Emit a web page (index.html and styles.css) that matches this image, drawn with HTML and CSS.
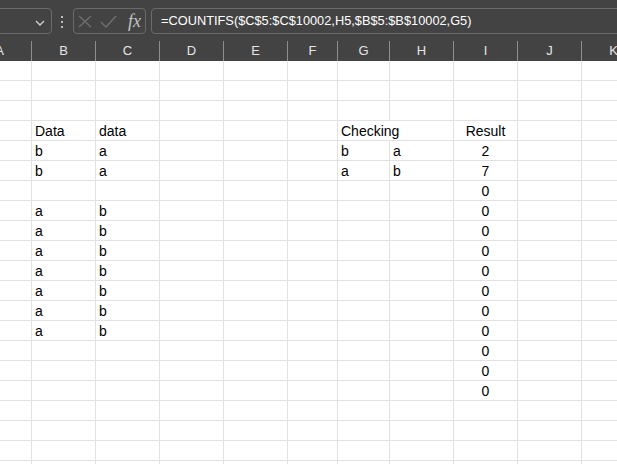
FILE: index.html
```html
<!DOCTYPE html>
<html>
<head>
<meta charset="utf-8">
<link rel="stylesheet" href="styles.css">
</head>
<body>
<div class="app">
  <div class="toolbar">
    <div class="namebox">
      <svg class="chev" width="10" height="6" viewBox="0 0 10 6"><polyline points="1,1 5,5 9,1" fill="none" stroke="#d2d2d2" stroke-width="1.3"/></svg>
    </div>
    <div class="dots"><span></span><span></span><span></span></div>
    <div class="fxbox">
      <svg width="48" height="24" viewBox="0 0 48 24">
        <path d="M5 7 L17 18 M17 7 L5 18" stroke="#707070" stroke-width="1.3" fill="none"/>
        <polyline points="27,13 32,18 42,7" stroke="#707070" stroke-width="1.3" fill="none"/>
      </svg>
      <span class="fx">fx</span>
    </div>
    <div class="formula">=COUNTIFS($C$5:$C$10002,H5,$B$5:$B$10002,G5)</div>
  </div>
  <div class="colhead">
    <div class="ch">A</div><div class="ch">B</div><div class="ch">C</div><div class="ch">D</div><div class="ch">E</div><div class="ch nf">F</div><div class="ch ng">G</div><div class="ch">H</div><div class="ch">I</div><div class="ch">J</div><div class="ch">K</div>
  </div>
  <div class="sheet">
    <div class="row"><div class="c"></div><div class="c"></div><div class="c"></div><div class="c"></div><div class="c"></div><div class="c"></div><div class="c"></div><div class="c"></div><div class="c"></div><div class="c"></div><div class="c"></div></div>
    <div class="row"><div class="c"></div><div class="c"></div><div class="c"></div><div class="c"></div><div class="c"></div><div class="c"></div><div class="c"></div><div class="c"></div><div class="c"></div><div class="c"></div><div class="c"></div></div>
    <div class="row"><div class="c"></div><div class="c"></div><div class="c"></div><div class="c"></div><div class="c"></div><div class="c"></div><div class="c"></div><div class="c"></div><div class="c"></div><div class="c"></div><div class="c"></div></div>
    <div class="row"><div class="c"></div><div class="c">Data</div><div class="c">data</div><div class="c"></div><div class="c"></div><div class="c"></div><div class="c spill">Checking</div><div class="c"></div><div class="c num">Result</div><div class="c"></div><div class="c"></div></div>
    <div class="row"><div class="c"></div><div class="c">b</div><div class="c">a</div><div class="c"></div><div class="c"></div><div class="c"></div><div class="c">b</div><div class="c">a</div><div class="c num">2</div><div class="c"></div><div class="c"></div></div>
    <div class="row"><div class="c"></div><div class="c">b</div><div class="c">a</div><div class="c"></div><div class="c"></div><div class="c"></div><div class="c">a</div><div class="c">b</div><div class="c num">7</div><div class="c"></div><div class="c"></div></div>
    <div class="row"><div class="c"></div><div class="c"></div><div class="c"></div><div class="c"></div><div class="c"></div><div class="c"></div><div class="c"></div><div class="c"></div><div class="c num">0</div><div class="c"></div><div class="c"></div></div>
    <div class="row"><div class="c"></div><div class="c">a</div><div class="c">b</div><div class="c"></div><div class="c"></div><div class="c"></div><div class="c"></div><div class="c"></div><div class="c num">0</div><div class="c"></div><div class="c"></div></div>
    <div class="row"><div class="c"></div><div class="c">a</div><div class="c">b</div><div class="c"></div><div class="c"></div><div class="c"></div><div class="c"></div><div class="c"></div><div class="c num">0</div><div class="c"></div><div class="c"></div></div>
    <div class="row"><div class="c"></div><div class="c">a</div><div class="c">b</div><div class="c"></div><div class="c"></div><div class="c"></div><div class="c"></div><div class="c"></div><div class="c num">0</div><div class="c"></div><div class="c"></div></div>
    <div class="row"><div class="c"></div><div class="c">a</div><div class="c">b</div><div class="c"></div><div class="c"></div><div class="c"></div><div class="c"></div><div class="c"></div><div class="c num">0</div><div class="c"></div><div class="c"></div></div>
    <div class="row"><div class="c"></div><div class="c">a</div><div class="c">b</div><div class="c"></div><div class="c"></div><div class="c"></div><div class="c"></div><div class="c"></div><div class="c num">0</div><div class="c"></div><div class="c"></div></div>
    <div class="row"><div class="c"></div><div class="c">a</div><div class="c">b</div><div class="c"></div><div class="c"></div><div class="c"></div><div class="c"></div><div class="c"></div><div class="c num">0</div><div class="c"></div><div class="c"></div></div>
    <div class="row"><div class="c"></div><div class="c">a</div><div class="c">b</div><div class="c"></div><div class="c"></div><div class="c"></div><div class="c"></div><div class="c"></div><div class="c num">0</div><div class="c"></div><div class="c"></div></div>
    <div class="row"><div class="c"></div><div class="c"></div><div class="c"></div><div class="c"></div><div class="c"></div><div class="c"></div><div class="c"></div><div class="c"></div><div class="c num">0</div><div class="c"></div><div class="c"></div></div>
    <div class="row"><div class="c"></div><div class="c"></div><div class="c"></div><div class="c"></div><div class="c"></div><div class="c"></div><div class="c"></div><div class="c"></div><div class="c num">0</div><div class="c"></div><div class="c"></div></div>
    <div class="row"><div class="c"></div><div class="c"></div><div class="c"></div><div class="c"></div><div class="c"></div><div class="c"></div><div class="c"></div><div class="c"></div><div class="c num">0</div><div class="c"></div><div class="c"></div></div>
    <div class="row"><div class="c"></div><div class="c"></div><div class="c"></div><div class="c"></div><div class="c"></div><div class="c"></div><div class="c"></div><div class="c"></div><div class="c"></div><div class="c"></div><div class="c"></div></div>
    <div class="row"><div class="c"></div><div class="c"></div><div class="c"></div><div class="c"></div><div class="c"></div><div class="c"></div><div class="c"></div><div class="c"></div><div class="c"></div><div class="c"></div><div class="c"></div></div>
    <div class="row"><div class="c"></div><div class="c"></div><div class="c"></div><div class="c"></div><div class="c"></div><div class="c"></div><div class="c"></div><div class="c"></div><div class="c"></div><div class="c"></div><div class="c"></div></div>
    <div class="row"><div class="c"></div><div class="c"></div><div class="c"></div><div class="c"></div><div class="c"></div><div class="c"></div><div class="c"></div><div class="c"></div><div class="c"></div><div class="c"></div><div class="c"></div></div>
  </div>
</div>
</body>
</html>
```
FILE: styles.css
```css
html, body {
  margin: 0;
  padding: 0;
  background: #ffffff;
}
body {
  width: 617px;
  height: 464px;
  overflow: hidden;
}
.app {
  width: 617px;
  height: 464px;
  overflow: hidden;
  font-family: "Liberation Sans", Arial, sans-serif;
}
.toolbar {
  height: 34px;
  box-sizing: border-box;
  padding-top: 8px;
  background: #434343;
  display: flex;
  align-items: flex-start;
}
.namebox {
  flex: none;
  width: 100px;
  height: 26px;
  margin-left: -48px;
  box-sizing: border-box;
  border: 1px solid #6b6b6b;
  border-radius: 4px;
  display: flex;
  justify-content: flex-end;
  align-items: center;
  padding-right: 6px;
}
.chev {
  margin-top: 3px;
}
.dots {
  flex: none;
  width: 2px;
  margin-left: 9px;
  margin-top: 8px;
  display: flex;
  flex-direction: column;
  gap: 3px;
}
.dots span {
  width: 2px;
  height: 2px;
  background: #bdbdbd;
}
.fxbox {
  flex: none;
  width: 73px;
  height: 26px;
  margin-left: 10px;
  box-sizing: border-box;
  border: 1px solid #6b6b6b;
  border-radius: 4px;
  display: flex;
  align-items: center;
}
.fxbox svg {
  flex: none;
}
.fx {
  font-family: "Liberation Serif", "Times New Roman", serif;
  font-style: italic;
  font-size: 18px;
  color: #c4c4c4;
  margin-left: 6px;
  line-height: 20px;
  margin-top: -1px;
}
.formula {
  flex: none;
  width: 520px;
  height: 26px;
  margin-left: 5px;
  box-sizing: border-box;
  border: 1px solid #6b6b6b;
  border-radius: 4px;
  color: #ffffff;
  font-size: 12.8px;
  line-height: 24px;
  padding-left: 9px;
  white-space: nowrap;
}
.colhead {
  height: 27px;
  box-sizing: border-box;
  padding-top: 7px;
  background: #434343;
  display: grid;
  grid-template-columns: 64px 64px 64px 64px 64px 50px 52px 64px 64px 64px 64px;
  margin-left: -32px;
  width: 710px;
}
.ch {
  height: 20px;
  box-sizing: border-box;
  border-right: 1px solid #8e8e8e;
  color: #e6e6e6;
  font-size: 13px;
  line-height: 20px;
  text-align: center;
}
.sheet {
  margin-left: -32px;
  width: 710px;
}
.row {
  display: grid;
  grid-template-columns: 64px 64px 64px 64px 64px 50px 52px 64px 64px 64px 64px;
  height: 20px;
}
.c {
  box-sizing: border-box;
  height: 20px;
  border-right: 1px solid #e1e1e1;
  border-bottom: 1px solid #e1e1e1;
  padding: 1px 3px 0 3px;
  font-size: 14px;
  line-height: 18px;
  color: #000000;
  white-space: nowrap;
}
.num {
  text-align: center;
  padding-left: 0;
  padding-right: 0;
}
.spill {
  border-right-color: transparent;
  overflow: visible;
}
```
